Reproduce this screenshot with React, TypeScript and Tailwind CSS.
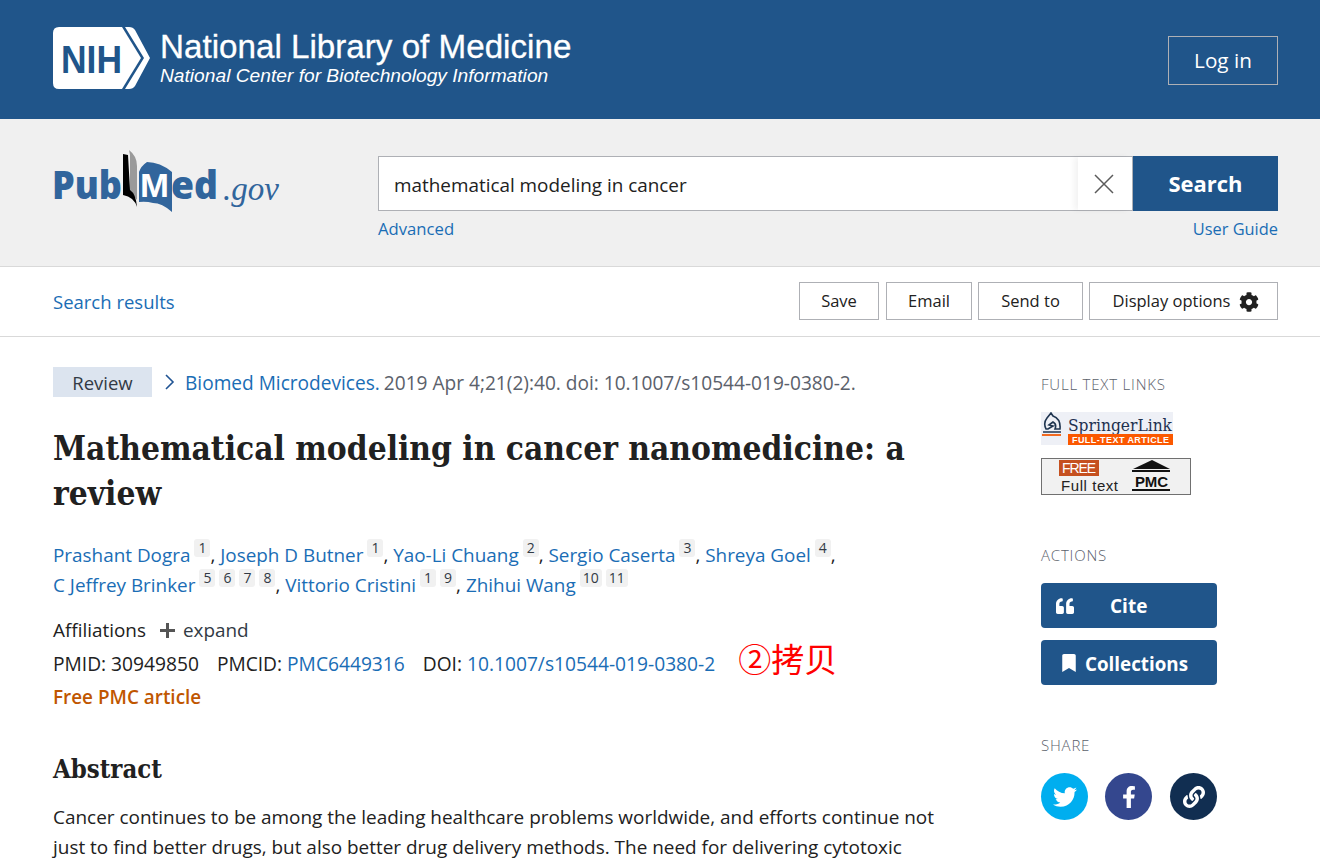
import React from "react";
import { FaTwitter, FaFacebookF, FaLink, FaQuoteLeft, FaBookmark, FaCog } from "react-icons/fa";

const link = "text-[#1a6db5]";
const heading = "text-[15px] font-light uppercase leading-[20px] tracking-[0.8px] text-[#5b616b]";

function NihLogo() {
  return (
    <svg width="98" height="62" viewBox="0 0 98 62" className="shrink-0">
      <path d="M6 0H69L88 31L69 62H6Q0 62 0 56V6Q0 0 6 0Z" fill="#fff" />
      <path d="M72 0H76Q80 0 82 3L97 31L82 59Q80 62 76 62H72L91 31Z" fill="#fff" />
      <text x="8" y="46" fontFamily="Liberation Sans" fontWeight="700" fontSize="39" fill="#20558a" textLength="61" lengthAdjust="spacingAndGlyphs">NIH</text>
    </svg>
  );
}

function PubMedLogo() {
  return (
    <svg width="228" height="64" viewBox="0 0 228 64" className="shrink-0">
      <text x="0" y="49" fontFamily="Open Sans" fontWeight="800" fontSize="39" fill="#31659c" textLength="70" lengthAdjust="spacingAndGlyphs">Pub</text>
      <path d="M77 0Q85 6 85 16V50L78 42V5Z" fill="#9a9a9a" />
      <path d="M71 4L76 5L78 40Q84 44 85 57Q82 47 71 45Z" fill="#000" />
      <path d="M87 52V22Q89 16 95 12Q108 12 120 22V62Q110 53 101 53Q94 51 87 52Z" fill="#31659c" />
      <text x="88" y="47" fontFamily="Liberation Sans" fontWeight="700" fontSize="33" fill="#fff" textLength="29" lengthAdjust="spacingAndGlyphs">M</text>
      <text x="119" y="49" fontFamily="Open Sans" fontWeight="800" fontSize="39" fill="#31659c" textLength="47" lengthAdjust="spacingAndGlyphs">ed</text>
      <text x="171" y="50" fontFamily="Liberation Serif" fontStyle="italic" fontSize="34" fill="#31659c" textLength="56" lengthAdjust="spacingAndGlyphs">.gov</text>
    </svg>
  );
}

function SpringerBadge() {
  return (
    <svg width="132" height="33" viewBox="0 0 132 33" className="block">
      <rect width="132" height="33" fill="#eef0f6" />
      <path d="M5 17Q2 11 6 6L10 1L12 4Q20 7 19 17H14Q16 12 12 10L8 13L12 14L7 17ZM2 20H20" fill="none" stroke="#1f3550" strokeWidth="1.6" />
      <rect x="1" y="22" width="19" height="2" fill="#f26a21" />
      <text x="27" y="19" fontFamily="DejaVu Serif Condensed, DejaVu Serif" fontSize="16" fill="#1e3150" textLength="104" lengthAdjust="spacingAndGlyphs">SpringerLink</text>
      <rect x="27" y="22" width="105" height="11" fill="#fb5800" />
      <text x="31" y="31" fontFamily="Liberation Sans" fontWeight="700" fontSize="9" fill="#fff" textLength="97">FULL-TEXT ARTICLE</text>
    </svg>
  );
}

function PmcBadge() {
  return (
    <svg width="150" height="37" viewBox="0 0 150 37" className="block">
      <rect x="0.5" y="0.5" width="149" height="36" fill="#f1f1f1" stroke="#707070" />
      <rect x="18" y="2" width="40" height="16" fill="#c5501f" />
      <text x="21" y="15" fontFamily="Liberation Sans" fontSize="14" fill="#fff" textLength="34">FREE</text>
      <text x="20" y="33" fontFamily="Liberation Sans" fontSize="15" fill="#222" textLength="57">Full text</text>
      <path d="M111 2L129 11H92Z" fill="#111" />
      <rect x="91" y="12" width="38" height="2" fill="#111" />
      <text x="94" y="29" fontFamily="Liberation Sans" fontWeight="700" fontSize="15" fill="#111" textLength="33">PMC</text>
      <rect x="91" y="31" width="38" height="2" fill="#111" />
    </svg>
  );
}

function Sup({ n }: { n: string }) {
  return (
    <sup className="relative top-[-9px] ml-[4px] inline-block min-w-[16px] rounded-[3px] bg-[#f1f1f1] px-[3px] text-center align-baseline text-[14px] leading-[18px] text-[#323a45]">
      {n}
    </sup>
  );
}

function ToolButton({ children, w }: { children: React.ReactNode; w: string }) {
  return (
    <div className={`flex h-[38px] items-center justify-center border border-[#aeb0b5] pt-[2px] text-[16.5px] text-[#212121] ${w}`}>{children}</div>
  );
}

function Author({ name, sups, comma = true }: { name: string; sups: string[]; comma?: boolean }) {
  return (
    <>
      <span className={link}>{name}</span>
      {sups.map((s) => (
        <Sup key={s} n={s} />
      ))}
      {comma ? <span>, </span> : null}
    </>
  );
}

export default function App() {
  return (
    <div className="h-[867px] overflow-hidden bg-white text-[#212121] [font-family:'Open_Sans',sans-serif]">
      <header className="flex h-[119px] items-start justify-between bg-[#20558a] pl-[53px] pr-[42px] pt-[27px]">
        <div className="flex items-center gap-[9px] text-white">
          <NihLogo />
          <div className="pb-[1px] [font-family:'Liberation_Sans',sans-serif]">
            <div className="text-[33.2px] leading-[36px] [-webkit-text-stroke:0.3px_white]">National Library of Medicine</div>
            <div className="-mt-[1px] text-[19.2px] italic leading-[23px]">National Center for Biotechnology Information</div>
          </div>
        </div>
        <div className="mt-[9px] flex h-[49px] w-[110px] items-center justify-center border border-[#aeb0b5] text-[20.7px] text-white">Log in</div>
      </header>

      <section className="flex h-[148px] border-b border-[#d9d9d9] bg-[#f0f0f0] pl-[52px] pr-[42px] pt-[31px]">
        <div className="w-[326px] shrink-0">
          <PubMedLogo />
        </div>
        <div className="flex-1 pt-[6px]">
          <div className="flex h-[55px]">
            <div className="flex flex-1 items-center border border-[#aeb0b5] bg-white pl-[15px]">
              <span className="mt-[3px] flex-1 text-[18.9px] text-[#212121]">mathematical modeling in cancer</span>
              <div className="mr-[2px] flex h-full w-[52px] items-center justify-center bg-white shadow-[-4px_0_6px_rgba(0,0,0,0.05)]">
                <svg width="20" height="20" viewBox="0 0 20 20" fill="none" stroke="#5b5b5b" strokeWidth="1.5">
                  <path d="M1 1L19 19M19 1L1 19" />
                </svg>
              </div>
            </div>
            <div className="flex w-[145px] items-center justify-center bg-[#20558a] text-[22px] font-bold text-white">Search</div>
          </div>
          <div className="mt-[7px] flex justify-between leading-[22px]">
            <span className={`text-[16.7px] ${link}`}>Advanced</span>
            <span className={`text-[16.4px] ${link}`}>User Guide</span>
          </div>
        </div>
      </section>

      <nav className="flex h-[70px] items-center justify-between border-b border-[#d9d9d9] pl-[53px] pr-[42px]">
        <span className={`text-[18.5px] ${link}`}>Search results</span>
        <div className="mb-[2px] flex gap-[6px]">
          <ToolButton w="w-[80px] mr-[1px]">Save</ToolButton>
          <ToolButton w="w-[86px]">Email</ToolButton>
          <ToolButton w="w-[105px]">Send to</ToolButton>
          <ToolButton w="w-[189px] gap-[9px] pl-[5px]">
            Display options <FaCog className="text-[20px] text-[#212121]" />
          </ToolButton>
        </div>
      </nav>

      <main className="flex justify-between pl-[53px] pr-[42px]">
        <article className="w-[890px] pt-[30px]">
          <div className="flex h-[30px] items-center text-[19.1px]">
            <span className="flex h-[30px] w-[99px] items-center justify-center bg-[#dce4ef] pt-[2px] text-[18.5px] text-[#323a45]">Review</span>
            <svg width="12" height="16" viewBox="0 0 12 16" fill="none" stroke="#205493" strokeWidth="1.6" className="ml-[12px] mr-[9px]">
              <path d="M2 1L9 8L2 15" />
            </svg>
            <span className={`pt-[2px] ${link}`}>Biomed Microdevices.</span>
            <span className="ml-[4px] pt-[2px] text-[#5b616b]">2019 Apr 4;21(2):40. doi: 10.1007/s10544-019-0380-2.</span>
          </div>
          <h1 className="mt-[29px] text-[33.2px] font-bold leading-[45px] text-[#212121] [font-family:'DejaVu_Serif_Condensed','DejaVu_Serif',serif]">
            Mathematical modeling in cancer nanomedicine: a review
          </h1>
          <div className="mt-[24px] text-[18.9px] leading-[30px]">
            <Author name="Prashant Dogra" sups={["1"]} />
            <Author name="Joseph D Butner" sups={["1"]} />
            <Author name="Yao-Li Chuang" sups={["2"]} />
            <Author name="Sergio Caserta" sups={["3"]} />
            <Author name="Shreya Goel" sups={["4"]} />
            <br />
            <Author name="C Jeffrey Brinker" sups={["5", "6", "7", "8"]} />
            <Author name="Vittorio Cristini" sups={["1", "9"]} />
            <Author name="Zhihui Wang" sups={["10", "11"]} comma={false} />
          </div>
          <div className="mt-[15px] flex h-[30px] items-center text-[18.9px]">
            Affiliations
            <svg width="15" height="15" viewBox="0 0 15 15" fill="#555" className="ml-[14px] mr-[8px]">
              <path d="M6 0h3v6h6v3H9v6H6V9H0V6h6z" />
            </svg>
            <span className="text-[#323a45]">expand</span>
          </div>
          <div className="mt-[2px] flex h-[34px] items-center text-[19.2px]">
            <span>PMID: 30949850</span>
            <span className="ml-[18px]">PMCID: <span className={link}>PMC6449316</span></span>
            <span className="ml-[18px]">DOI: <span className={link}>10.1007/s10544-019-0380-2</span></span>
            <span className="mb-[12px] ml-[23px] text-[33px] leading-[34px] text-[#ff0000] [font-family:'Noto_Sans_CJK_SC',sans-serif]">②拷贝</span>
          </div>
          <div className="mt-[1px] text-[18.9px] font-semibold leading-[30px] text-[#c05600]">Free PMC article</div>
          <h2 className="mt-[39px] text-[25.5px] font-bold leading-[36px] text-[#212121] [font-family:'DejaVu_Serif_Condensed','DejaVu_Serif',serif]">Abstract</h2>
          <p className="mt-[15px] text-[18.95px] leading-[30px]">
            Cancer continues to be among the leading healthcare problems worldwide, and efforts continue not just to find better drugs, but also better drug delivery methods. The need for delivering cytotoxic
          </p>
        </article>

        <aside className="w-[237px] pt-[37px]">
          <div className={heading}>Full text links</div>
          <div className="mt-[18px]"><SpringerBadge /></div>
          <div className="mt-[13px]"><PmcBadge /></div>
          <div className={`mt-[50px] ${heading}`}>Actions</div>
          <div className="mt-[18px] flex h-[45px] w-[176px] items-center rounded-[4px] bg-[#20558a] pl-[15px] text-[19px] font-bold text-white">
            <FaQuoteLeft className="text-[18px]" />
            <span className="ml-[36px] pt-[2px]">Cite</span>
          </div>
          <div className="mt-[12px] flex h-[45px] w-[176px] items-center rounded-[4px] bg-[#20558a] pl-[19px] text-[18.8px] font-bold text-white">
            <FaBookmark className="text-[18px]" />
            <span className="ml-[7px] pt-[3px]">Collections</span>
          </div>
          <div className={`mt-[50px] ${heading}`}>Share</div>
          <div className="mt-[18px] flex">
            <div className="flex h-[47px] w-[47px] items-center justify-center rounded-full bg-[#00aeef] text-[24px] text-white"><FaTwitter /></div>
            <div className="ml-[17px] flex h-[47px] w-[47px] items-center justify-center rounded-full bg-[#34478e] text-[22px] text-white"><FaFacebookF /></div>
            <div className="ml-[18px] flex h-[47px] w-[47px] items-center justify-center rounded-full bg-[#112e51] text-[22px] text-white"><FaLink /></div>
          </div>
        </aside>
      </main>
    </div>
  );
}
